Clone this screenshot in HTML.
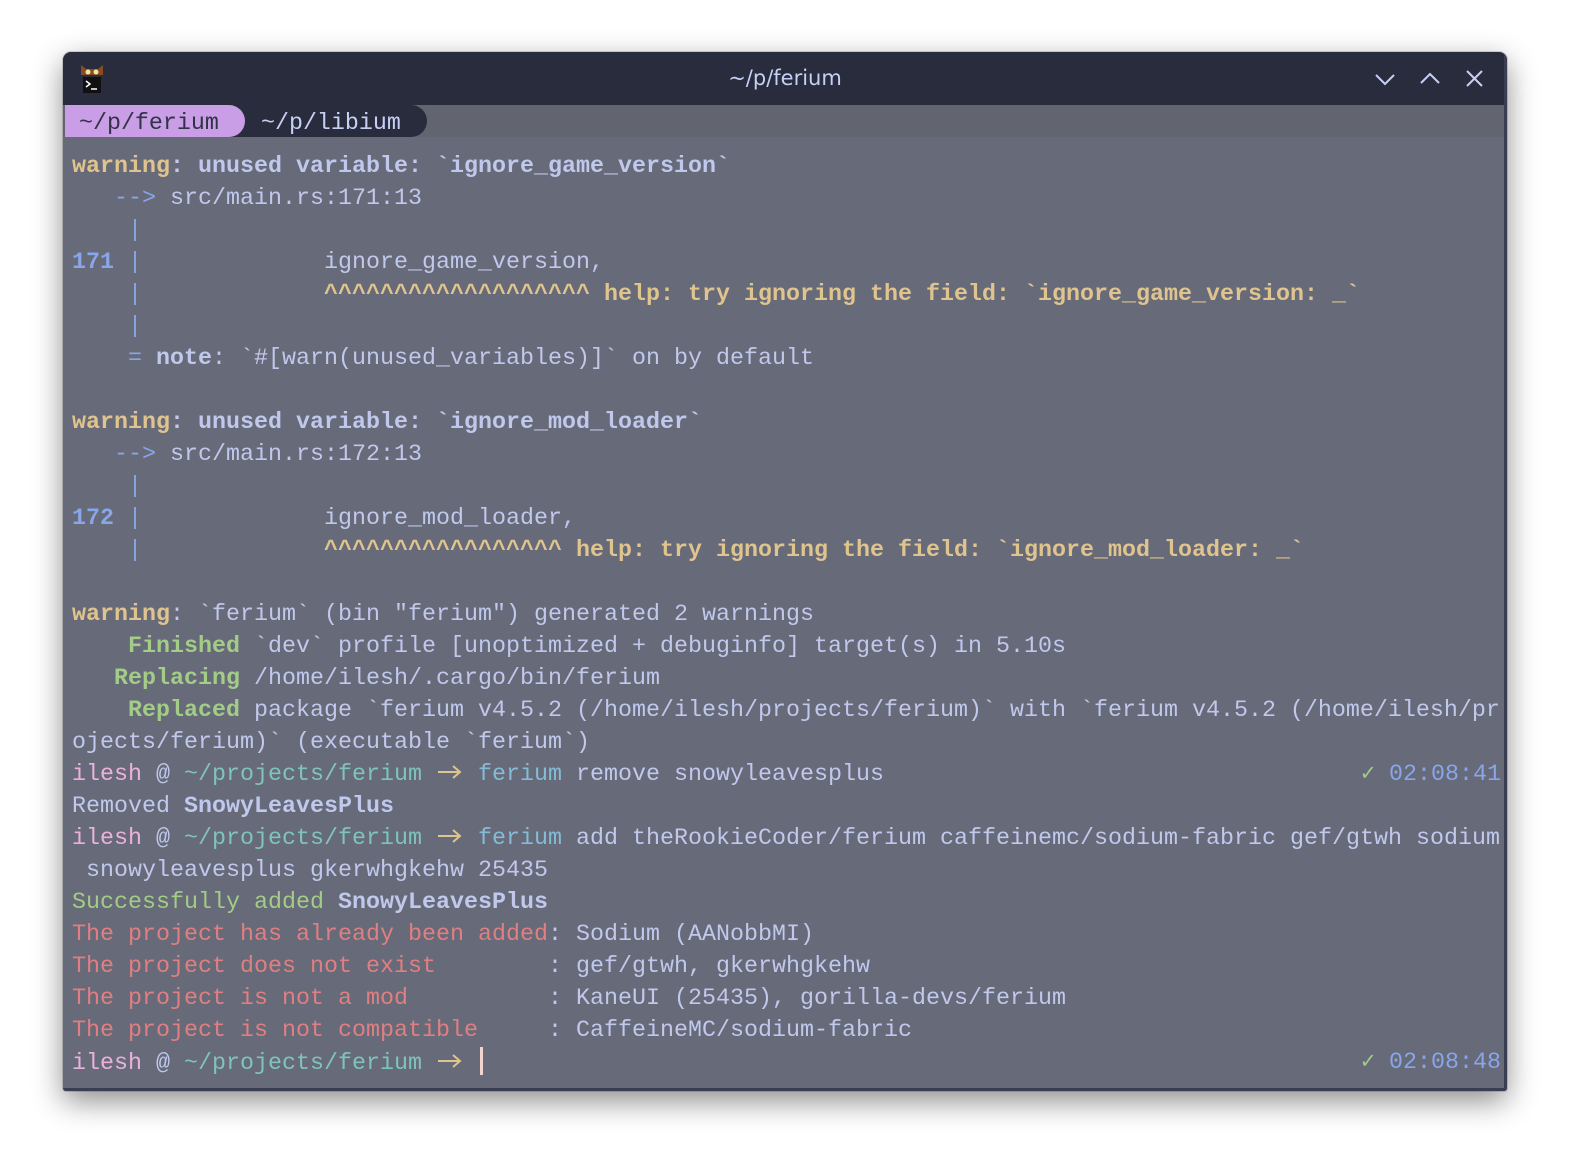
<!DOCTYPE html>
<html><head><meta charset="utf-8"><style>
html,body{margin:0;padding:0;background:#fff;width:1572px;height:1167px;overflow:hidden}
.win{position:absolute;left:63px;top:52px;width:1444px;height:1039px;background:#676a79;border-radius:8px 8px 3px 3px;overflow:hidden;box-shadow:0 10px 30px rgba(0,0,0,.45),0 0 0 1px rgba(0,0,0,.15)}
.title{position:absolute;left:0;top:0;right:0;height:53px;background:#292c3c;color:#c6d0f5;font:21px "DejaVu Sans","Liberation Sans",sans-serif;text-align:center;line-height:52px}
.tabs{position:absolute;left:0;top:53px;right:0;height:32px;background:#626570}
.tab1{position:absolute;left:2px;top:0;width:180px;height:32px;background:#ca9ee6;border-radius:0 16px 16px 0;z-index:2}
.tab2{position:absolute;left:160px;top:0;width:204px;height:32px;background:#292c3c;border-radius:0 16px 16px 0;z-index:1}
.tabt{position:absolute;top:2px;font:23.3px "Liberation Mono",monospace;line-height:32px;z-index:3}
.term{position:absolute;left:9px;top:99px;font:23.33px "Liberation Mono","DejaVu Sans Mono",monospace;line-height:32px;color:#c0c8ec;white-space:pre}
.bl{position:absolute;right:0;top:0;bottom:0;width:3px;background:#3b3e52}
.bb{position:absolute;left:0;right:0;bottom:0;height:3px;background:#3b3e52}
.y{color:#e0c48e}.g{color:#a3cc86}.r{color:#e07f81}.t{color:#7fc4ba}.p{color:#eab2db}.b{color:#88a6e8}.s{color:#84bcd6}
b{font-weight:bold}
.ln{height:32px;position:relative}
.ts{position:absolute;left:1289px;top:0}
.ar{display:inline-block;width:28px;height:20px;vertical-align:-2px}
.cur{display:inline-block;width:3px;height:28px;background:#f2d5cf;vertical-align:-6px;margin-left:2px}
</style></head><body>
<div class="win">
<div class="title">~/p/ferium
<svg style="position:absolute;left:14px;top:11px" width="30" height="32" viewBox="0 0 30 32"><path d="M4 2l5 4h12l5-4v10H4z" fill="#8a4a22"/><circle cx="11" cy="9" r="2.5" fill="#f3e7a0"/><circle cx="19" cy="9" r="2.5" fill="#f3e7a0"/><rect x="6" y="14" width="18" height="16" fill="#111"/><path d="M9 18l4 3-4 3" stroke="#fff" stroke-width="1.5" fill="none"/><path d="M14 26h6" stroke="#fff" stroke-width="1.5"/></svg>
<svg style="position:absolute;left:1310px;top:16px" width="120" height="22" viewBox="0 0 120 22" fill="none" stroke="#c6d0f5" stroke-width="2"><path d="M3 7l9 9 9-9"/><path d="M48 15l9-9 9 9"/><path d="M94 3l15 15M109 3L94 18"/></svg>
</div>
<div class="tabs"><div class="tab1"></div><div class="tab2"></div>
<div class="tabt" style="left:16px;color:#303446">~/p/ferium</div>
<div class="tabt" style="left:198px;color:#c6d0f5">~/p/libium</div></div>
<div class="term"><div class="ln"><b class="y">warning</b><b>: unused variable: `ignore_game_version`</b></div><div class="ln"><span class="b">   --&gt;</span> src/main.rs:171:13</div><div class="ln"><span class="b">    |</span></div><div class="ln"><b class="b">171</b><span class="b"> |</span>             ignore_game_version,</div><div class="ln"><span class="b">    |</span>             <b class="y">^^^^^^^^^^^^^^^^^^^ help: try ignoring the field: `ignore_game_version: _`</b></div><div class="ln"><span class="b">    |</span></div><div class="ln"><span class="b">    =</span> <b>note</b>: `#[warn(unused_variables)]` on by default</div><div class="ln"> </div><div class="ln"><b class="y">warning</b><b>: unused variable: `ignore_mod_loader`</b></div><div class="ln"><span class="b">   --&gt;</span> src/main.rs:172:13</div><div class="ln"><span class="b">    |</span></div><div class="ln"><b class="b">172</b><span class="b"> |</span>             ignore_mod_loader,</div><div class="ln"><span class="b">    |</span>             <b class="y">^^^^^^^^^^^^^^^^^ help: try ignoring the field: `ignore_mod_loader: _`</b></div><div class="ln"> </div><div class="ln"><b class="y">warning</b>: `ferium` (bin "ferium") generated 2 warnings</div><div class="ln">    <b class="g">Finished</b> `dev` profile [unoptimized + debuginfo] target(s) in 5.10s</div><div class="ln">   <b class="g">Replacing</b> /home/ilesh/.cargo/bin/ferium</div><div class="ln">    <b class="g">Replaced</b> package `ferium v4.5.2 (/home/ilesh/projects/ferium)` with `ferium v4.5.2 (/home/ilesh/pr</div><div class="ln">ojects/ferium)` (executable `ferium`)</div><div class="ln"><span class="p">ilesh</span> @ <span class="t">~/projects/ferium</span> <svg class="ar" viewBox="0 0 28 20"><path d="M2 10h22M17 4l7 6-7 6" stroke="#e0c48e" stroke-width="2" fill="none"/></svg> <span class="s">ferium</span> remove snowyleavesplus<span class="ts"><span class="g">✓</span> <span class="b">02:08:41</span></span></div><div class="ln">Removed <b>SnowyLeavesPlus</b></div><div class="ln"><span class="p">ilesh</span> @ <span class="t">~/projects/ferium</span> <svg class="ar" viewBox="0 0 28 20"><path d="M2 10h22M17 4l7 6-7 6" stroke="#e0c48e" stroke-width="2" fill="none"/></svg> <span class="s">ferium</span> add theRookieCoder/ferium caffeinemc/sodium-fabric gef/gtwh sodium</div><div class="ln"> snowyleavesplus gkerwhgkehw 25435</div><div class="ln"><span class="g">Successfully added</span> <b>SnowyLeavesPlus</b></div><div class="ln"><span class="r">The project has already been added</span>: Sodium (AANobbMI)</div><div class="ln"><span class="r">The project does not exist</span>        : gef/gtwh, gkerwhgkehw</div><div class="ln"><span class="r">The project is not a mod</span>          : KaneUI (25435), gorilla-devs/ferium</div><div class="ln"><span class="r">The project is not compatible</span>     : CaffeineMC/sodium-fabric</div><div class="ln"><span class="p">ilesh</span> @ <span class="t">~/projects/ferium</span> <svg class="ar" viewBox="0 0 28 20"><path d="M2 10h22M17 4l7 6-7 6" stroke="#e0c48e" stroke-width="2" fill="none"/></svg> <span class="cur"></span><span class="ts"><span class="g">✓</span> <span class="b">02:08:48</span></span></div></div>
<div class="bl"></div><div class="bb"></div>
</div>
</body></html>
